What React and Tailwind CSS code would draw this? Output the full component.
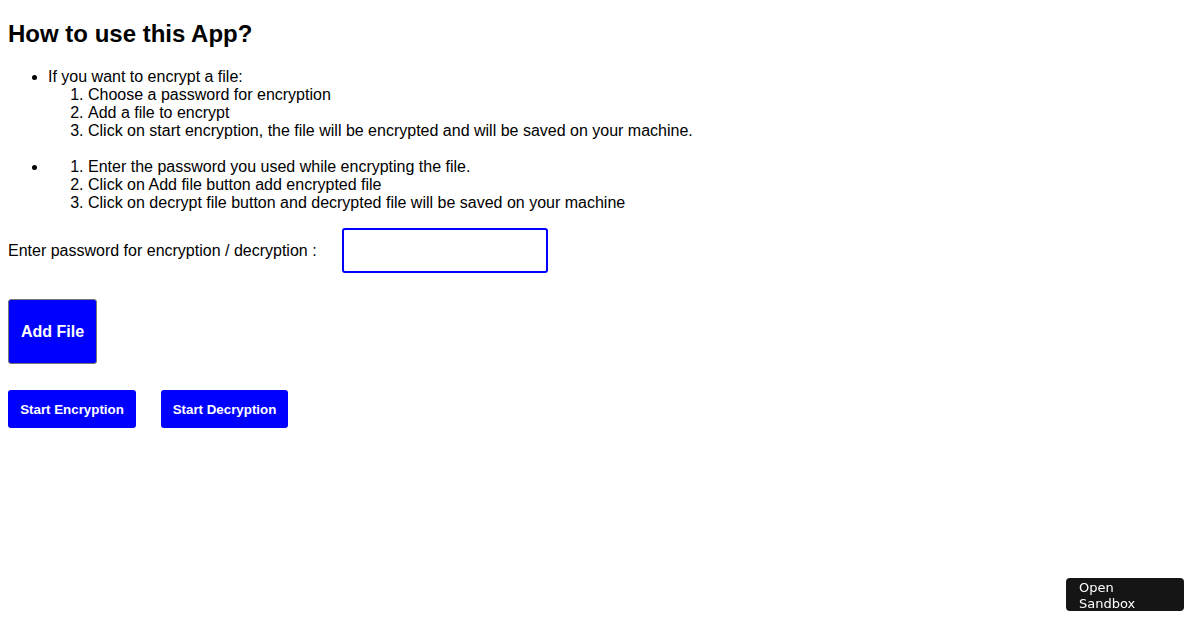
import React, { useState } from "react";

const Steps = ({ items }) => (
  <ol className="list-decimal pl-10">
    {items.map((s, i) => (
      <li key={i}>{s}</li>
    ))}
  </ol>
);

export default function App() {
  const [password, setPassword] = useState("");

  return (
    <div className="min-h-[630px] bg-white p-2 text-[16px] leading-[normal] text-black font-['Liberation_Sans',Arial,sans-serif]">
      <h2 className="mt-[12px] mb-[20px] text-[24px] font-bold leading-[normal]">How to use this App?</h2>

      <ul className="list-disc pl-10 my-4">
        <li>
          If you want to encrypt a file:
          <Steps
            items={[
              "Choose a password for encryption",
              "Add a file to encrypt",
              "Click on start encryption, the file will be encrypted and will be saved on your machine.",
            ]}
          />
          <br />
        </li>
        <li>
          <Steps
            items={[
              "Enter the password you used while encrypting the file.",
              "Click on Add file button add encrypted file",
              "Click on decrypt file button and decrypted file will be saved on your machine",
            ]}
          />
        </li>
      </ul>

      <div className="flex items-center">
        <label htmlFor="pwd" className="mr-[25px]">Enter password for encryption / decryption :</label>
        <input
          id="pwd"
          type="password"
          value={password}
          onChange={(e) => setPassword(e.target.value)}
          className="w-[206px] h-[45px] rounded-[3px] border-2 border-[#0000ff] px-2 outline-none"
        />
      </div>

      <button className="mt-[26px] block w-[89px] h-[65px] rounded-[3px] border border-[#767676] bg-[#0000ff] text-[16px] font-bold text-white">
        Add File
      </button>

      <div className="mt-[26px] flex gap-[25px]">
        <button className="w-[128px] h-[38px] rounded-[3px] bg-[#0000ff] text-[13.33px] font-bold text-white">
          Start Encryption
        </button>
        <button className="w-[127px] h-[38px] rounded-[3px] bg-[#0000ff] text-[13.33px] font-bold text-white">
          Start Decryption
        </button>
      </div>

      <a
        href="#"
        className="fixed right-[16px] bottom-[19px] w-[118px] h-[33px] rounded-[4px] bg-[#151515] pl-[13px] pr-[30px] pt-[2px] text-[13px] leading-[16px] text-white font-['DejaVu_Sans',Verdana,sans-serif]"
      >
        Open Sandbox
      </a>
    </div>
  );
}
